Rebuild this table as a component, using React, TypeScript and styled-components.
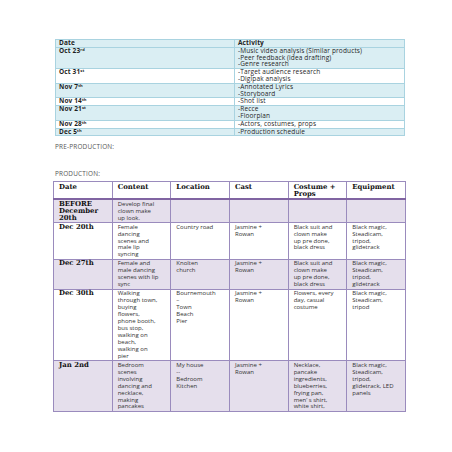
import React from "react";
import styled, { createGlobalStyle } from "styled-components";

const Global = createGlobalStyle`
  body {
    margin: 0;
    background: #ffffff;
    font-family: "Open Sans", "Liberation Sans", sans-serif;
  }
`;

const Page = styled.div`
  width: 452px;
  box-sizing: border-box;
  padding: 39px 46px 0 53px;
`;

const ScheduleTable = styled.table`
  margin-left: 2px;
  width: 350px;
  border-collapse: collapse;
  font-size: 6.5px;
  line-height: 6.8px;
  letter-spacing: 0.14px;
  color: #1f1f1f;
  td {
    border: 1px solid #a9d3e0;
    padding: 0 3px;
    vertical-align: top;
  }
  td:first-child {
    width: 172px;
    font-weight: 700;
  }
  sup {
    font-size: 4px;
    line-height: 0;
    vertical-align: 2.5px;
  }
`;

const ScheduleRow = styled.tr<{ $shade?: boolean; $head?: boolean }>`
  background: ${(p) => (p.$shade || p.$head ? "#daeef3" : "#ffffff")};
  td {
    font-weight: ${(p) => (p.$head ? 700 : "inherit")};
  }
`;

const Label = styled.p<{ $top: number }>`
  margin: ${(p) => p.$top}px 0 0 2px;
  font-size: 6.4px;
  line-height: 7px;
  letter-spacing: 0.2px;
  color: #555555;
`;

const ProdTable = styled.table`
  margin-top: 4px;
  width: 353px;
  border-collapse: collapse;
  table-layout: fixed;
  font-size: 6px;
  line-height: 6.95px;
  color: #333333;
  border: 1px solid #8f7fb5;
  td,
  th {
    border: 1px solid #9a8bbd;
    padding: 0.5px 4px 0.5px 5px;
    vertical-align: top;
    text-align: left;
    white-space: pre;
  }
  th,
  td:first-child {
    font-family: "DejaVu Serif", "Liberation Serif", serif;
    font-weight: 700;
    font-size: 6.9px;
    color: #111111;
  }
  th {
    border-bottom: 2px solid #8064a2;
    padding-top: 1.5px;
  }
`;

const ProdRow = styled.tr<{ $shade?: boolean }>`
  background: ${(p) => (p.$shade ? "#e5dfec" : "#ffffff")};
`;

const schedule: { date: string; sup: string; items: string[] }[] = [
  { date: "Oct 23", sup: "rd", items: ["-Music video analysis (Similar products)", "-Peer feedback (idea drafting)", "-Genre research"] },
  { date: "Oct 31", sup: "st", items: ["-Target audience research", "-Digipak analysis"] },
  { date: "Nov 7", sup: "th", items: ["-Annotated Lyrics", "-Storyboard"] },
  { date: "Nov 14", sup: "th", items: ["-Shot list"] },
  { date: "Nov 21", sup: "st", items: ["-Recce", "-Floorplan"] },
  { date: "Nov 28", sup: "th", items: ["-Actors, costumes, props"] },
  { date: "Dec 5", sup: "th", items: ["-Production schedule"] },
];

const suit = ["Black suit and", "clown make", "up pre done,", "black dress"];
const kit = ["Black magic,", "Steadicam,", "tripod,", "glidetrack"];
const cast = ["Jasmine +", "Rowan"];

const production: string[][][] = [
  [["BEFORE", "December", "20th"], ["Develop final", "clown make", "up look."], [], [], [], []],
  [["Dec 20th"], ["Female", "dancing", "scenes and", "male lip", "syncing"], ["Country road"], cast, suit, kit],
  [["Dec 27th"], ["Female and", "male dancing", "scenes with lip", "sync"], ["Knolten", "church"], cast, suit, kit],
  [
    ["Dec 30th"],
    ["Walking", "through town,", "buying", "flowers,", "phone booth,", "bus stop,", "walking on", "beach,", "walking on", "pier"],
    ["Bournemouth", "–", "Town", "Beach", "Pier"],
    cast,
    ["Flowers, every", "day, casual", "costume"],
    ["Black magic,", "Steadicam,", "tripod"],
  ],
  [
    ["Jan 2nd"],
    ["Bedroom", "scenes", "involving", "dancing and", "necklace,", "making", "pancakes"],
    ["My house", "--", "Bedroom", "Kitchen"],
    cast,
    ["Necklace,", "pancake", "ingredients,", "blueberries,", "frying pan,", "men’ s shirt,", "white shirt,"],
    ["Black magic,", "Steadicam,", "tripod,", "glidetrack, LED", "panels"],
  ],
];

const headers = ["Date", "Content", "Location", "Cast", "Costume +\nProps", "Equipment"];

export default function App() {
  return (
    <Page>
      <Global />
      <ScheduleTable>
        <tbody>
          <ScheduleRow $head>
            <td>Date</td>
            <td>Activity</td>
          </ScheduleRow>
          {schedule.map((r, i) => (
            <ScheduleRow key={r.date} $shade={i % 2 === 0}>
              <td>
                {r.date}
                <sup>{r.sup}</sup>
              </td>
              <td>
                {r.items.map((it) => (
                  <div key={it}>{it}</div>
                ))}
              </td>
            </ScheduleRow>
          ))}
        </tbody>
      </ScheduleTable>
      <Label $top={7}>PRE-PRODUCTION:</Label>
      <Label $top={20}>PRODUCTION:</Label>
      <ProdTable>
        <thead>
          <tr>
            {headers.map((h) => (
              <th key={h}>{h}</th>
            ))}
          </tr>
        </thead>
        <tbody>
          {production.map((r, i) => (
            <ProdRow key={i} $shade={i % 2 === 0}>
              {r.map((lines, j) => (
                <td key={j}>{lines.join("\n")}</td>
              ))}
            </ProdRow>
          ))}
        </tbody>
      </ProdTable>
    </Page>
  );
}
